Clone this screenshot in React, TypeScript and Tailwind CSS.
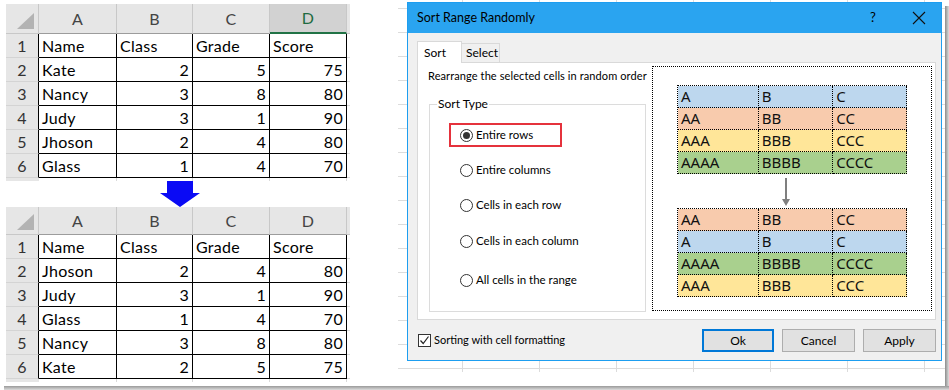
import React from "react";

const topRows = [
  ["Kate", 2, 5, 75],
  ["Nancy", 3, 8, 80],
  ["Judy", 3, 1, 90],
  ["Jhoson", 2, 4, 80],
  ["Glass", 1, 4, 70],
];

const bottomRows = [
  ["Jhoson", 2, 4, 80],
  ["Judy", 3, 1, 90],
  ["Glass", 1, 4, 70],
  ["Nancy", 3, 8, 80],
  ["Kate", 2, 5, 75],
];

const before = [
  { c: ["A", "B", "C"], bg: "bg-[#bdd7ee]" },
  { c: ["AA", "BB", "CC"], bg: "bg-[#f8cbad]" },
  { c: ["AAA", "BBB", "CCC"], bg: "bg-[#ffe699]" },
  { c: ["AAAA", "BBBB", "CCCC"], bg: "bg-[#a9d08e]" },
];

const after = [before[1], before[0], before[3], before[2]];

function Sheet({ rows, headerH, selected }: { rows: (string | number)[][]; headerH: string; selected: boolean }) {
  const cols = ["A", "B", "C", "D"];
  const widths = ["w-[78px]", "w-[76px]", "w-[77px]", "w-[77px]"];
  const all = [["Name", "Class", "Grade", "Score"], ...rows];
  return (
    <div className="w-[344px]">
      <div className={`flex ${headerH} bg-[#e6e6e6]`}>
        <div className="relative w-[33px] shrink-0 border-r border-b border-[#c8c8c8]">
          <svg className="absolute right-[4px] bottom-[4px]" width="17" height="16" viewBox="0 0 17 16">
            <polygon points="17,0 17,16 0,16" fill="#b3b3b3" />
          </svg>
        </div>
        {cols.map((c, i) => {
          const sel = selected && c === "D";
          return (
            <div
              key={c}
              className={`${widths[i]} shrink-0 flex items-center justify-center border-r border-[#c8c8c8] ${
                sel ? "bg-[#d2d2d2] text-[#1e6b41] border-b-2 border-b-[#217346]" : "text-[#444] border-b border-b-[#9c9c9c]"
              }`}
            >
              {c}
            </div>
          );
        })}
        <div className="w-[3px] border-b border-[#c8c8c8]" />
      </div>
      {all.map((r, ri) => (
        <div key={ri} className="flex h-[24px]">
          <div className="w-[33px] shrink-0 bg-[#e6e6e6] border-b border-b-[#d4d4d4] border-r border-r-black flex items-center justify-center text-[#333]">
            {ri + 1}
          </div>
          {r.map((v, ci) => (
            <div
              key={ci}
              className={`${widths[ci]} shrink-0 border-r border-b border-black px-[3px] flex items-center text-black ${
                typeof v === "number" ? "justify-end" : ""
              }`}
            >
              {v}
            </div>
          ))}
          <div className="w-[3px] border-b border-[#dadada]" />
        </div>
      ))}
      <div className="flex h-[3px]">
        <div className="w-[33px] shrink-0 bg-[#e6e6e6]" />
        {widths.map((w) => (
          <div key={w} className={`${w} shrink-0 border-r border-[#dadada]`} />
        ))}
      </div>
    </div>
  );
}

function Preview({ rows }: { rows: typeof before }) {
  const widths = ["w-[81px]", "w-[75px]", "w-[74px]"];
  return (
    <div className="w-[230px] border-t border-l border-dotted border-black">
      {rows.map((r, i) => (
        <div key={i} className={`flex h-[22px] ${r.bg}`}>
          {r.c.map((t, j) => (
            <div key={j} className={`${widths[j]} border-r border-b border-dotted border-black pl-[3px] flex items-center leading-none`}>
              {t}
            </div>
          ))}
        </div>
      ))}
    </div>
  );
}

function Radio({ label, checked }: { label: string; checked?: boolean }) {
  return (
    <div className="flex items-center gap-[3px] whitespace-nowrap">
      <span className="w-[13px] h-[13px] shrink-0 rounded-full border border-[#333] bg-white flex items-center justify-center">
        {checked && <span className="w-[7px] h-[7px] rounded-full bg-[#333]" />}
      </span>
      <span>{label}</span>
    </div>
  );
}

export default function App() {
  return (
    <div className="relative w-[949px] h-[390px] bg-white overflow-hidden font-['Lato',sans-serif] text-[16px] tracking-[0.3px]">
      {/* spreadsheet left behind the dialog */}
      <div className="absolute left-[398px] top-0 w-[547px] h-[372px] bg-[linear-gradient(to_right,#dcdcdc_1px,transparent_1px),linear-gradient(to_bottom,#dcdcdc_1px,transparent_1px)] bg-[size:77px_24px] bg-[position:64px_8px]" />

      <div className="flex flex-col pl-[6px] pt-[4px]">
        <Sheet rows={topRows} headerH="h-[30px]" selected />
        <div className="h-[26px] ml-[154px]">
          <svg width="40" height="26" viewBox="0 0 40 26">
            <polygon points="7,0 33,0 33,12 40,12 20,26 0,12 7,12" fill="#0a0af5" />
          </svg>
        </div>
        <Sheet rows={bottomRows} headerH="h-[28px]" selected={false} />
      </div>

      {/* dialog */}
      <div className="absolute left-[407px] top-[2px] w-[535px] h-[359px] border border-[#1d9ef0] bg-[#f0f0f0] flex flex-col text-[11.5px] tracking-normal text-black whitespace-nowrap">
        <div className="h-[30px] bg-[#2aa4f0] flex items-center">
          <span className="pl-[9px] text-[12.5px]">Sort Range Randomly</span>
          <span className="ml-auto w-[46px] text-center text-[13px]">?</span>
          <span className="w-[45px] flex justify-center">
            <svg width="14" height="14" viewBox="0 0 14 14">
              <path d="M1 1 L13 13 M13 1 L1 13" stroke="#111" strokeWidth="1.1" />
            </svg>
          </span>
        </div>

        <div className="flex items-end ml-[9px] mt-[8px] h-[21px] text-[12px]">
          <div className="relative z-10 w-[45px] h-[22px] -mb-[1px] bg-white border border-b-0 border-[#d9d9d9] pl-[6px] pt-[2px]">
            Sort
          </div>
          <div className="w-[38px] h-[19px] border border-l-0 border-b-0 border-[#d9d9d9] pl-[4px] flex items-center">
            Select
          </div>
        </div>

        <div className="ml-[9px] w-[519px] h-[258px] bg-white border border-[#d9d9d9] flex">
          <div className="w-[234px] shrink-0">
            <div className="pl-[10px] mt-[5px] leading-[16px] text-[11px] tracking-[0.1px]">Rearrange the selected cells in random order</div>
            <div className="relative ml-[11px] mt-[20px] w-[217px] h-[208px] border border-[#dcdcdc]">
              <span className="absolute -top-[9px] left-[7px] bg-white px-[1px] leading-[16px] text-[12px]">Sort Type</span>
              <div className="flex flex-col pl-[19px] pt-[18px]">
                <div className="w-[113px] h-[24px] border-2 border-[#e5323c] pl-[9px] flex items-center">
                  <Radio label="Entire rows" checked />
                </div>
                <div className="h-[20px] pl-[11px] mt-[13px] flex items-center">
                  <Radio label="Entire columns" />
                </div>
                <div className="h-[20px] pl-[11px] mt-[15px] flex items-center">
                  <Radio label="Cells in each row" />
                </div>
                <div className="h-[20px] pl-[11px] mt-[16px] flex items-center">
                  <Radio label="Cells in each column" />
                </div>
                <div className="h-[20px] pl-[11px] mt-[19px] flex items-center">
                  <Radio label="All cells in the range" />
                </div>
              </div>
            </div>
          </div>
          <div className="mt-[3px] w-[280px] h-[245px] border border-dotted border-black pl-[24px] pt-[18px] font-['Noto_Sans',sans-serif] text-[15px] text-[#111]">
            <Preview rows={before} />
            <div className="ml-[104px] mt-[4px] h-[28px]">
              <svg width="10" height="28" viewBox="0 0 10 28">
                <path d="M5 0 V22" stroke="#7f7f7f" strokeWidth="2" />
                <polygon points="1,21 9,21 5,28" fill="#7f7f7f" />
              </svg>
            </div>
            <div className="mt-[2px]">
              <Preview rows={after} />
            </div>
          </div>
        </div>

        <div className="flex items-center mt-[9px] h-[23px]">
          <div className="ml-[10px] flex items-center gap-[3px]">
            <span className="w-[13px] h-[13px] border border-[#333] bg-white flex items-center justify-center">
              <svg width="11" height="11" viewBox="0 0 11 11">
                <path d="M1.5 5.5 L4.2 8.5 L9.5 1.5" fill="none" stroke="#222" strokeWidth="1.2" />
              </svg>
            </span>
            <span className="text-[11px]">Sorting with cell formatting</span>
          </div>
          <div className="ml-auto mr-[5px] flex gap-[8px] text-[12px]">
            <button className="w-[72px] h-[23px] bg-[#e1e1e1] border-2 border-[#0078d7]">Ok</button>
            <button className="w-[73px] h-[23px] bg-[#e1e1e1] border border-[#adadad]">Cancel</button>
            <button className="w-[73px] h-[23px] bg-[#e1e1e1] border border-[#adadad]">Apply</button>
          </div>
        </div>
      </div>

      {/* screenshot shadow */}
      <div className="absolute right-0 top-[6px] bottom-0 w-[4px] bg-linear-to-r from-[#8c8c8c] to-[#dedede]" />
      <div className="absolute left-[4px] right-0 bottom-0 h-[4px] bg-linear-to-b from-[#9a9a9a] to-[#dcdcdc]" />
    </div>
  );
}
